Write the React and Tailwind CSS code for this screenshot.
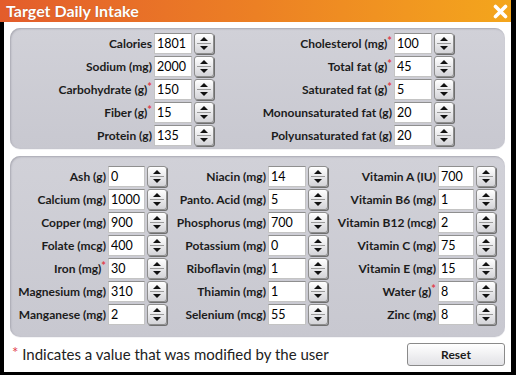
const panelOne = [
  { label: "Calories", value: "1801" },
  { label: "Cholesterol (mg)", value: "100", mod: true },
  { label: "Sodium (mg)", value: "2000" },
  { label: "Total fat (g)", value: "45", mod: true },
  { label: "Carbohydrate (g)", value: "150", mod: true },
  { label: "Saturated fat (g)", value: "5", mod: true },
  { label: "Fiber (g)", value: "15", mod: true },
  { label: "Monounsaturated fat (g)", value: "20" },
  { label: "Protein (g)", value: "135" },
  { label: "Polyunsaturated fat (g)", value: "20" },
];

const panelTwo = [
  { label: "Ash (g)", value: "0" },
  { label: "Niacin (mg)", value: "14" },
  { label: "Vitamin A (IU)", value: "700" },
  { label: "Calcium (mg)", value: "1000" },
  { label: "Panto. Acid (mg)", value: "5" },
  { label: "Vitamin B6 (mg)", value: "1" },
  { label: "Copper (mg)", value: "900" },
  { label: "Phosphorus (mg)", value: "700" },
  { label: "Vitamin B12 (mcg)", value: "2" },
  { label: "Folate (mcg)", value: "400" },
  { label: "Potassium (mg)", value: "0" },
  { label: "Vitamin C (mg)", value: "75" },
  { label: "Iron (mg)", value: "30", mod: true },
  { label: "Riboflavin (mg)", value: "1" },
  { label: "Vitamin E (mg)", value: "15" },
  { label: "Magnesium (mg)", value: "310" },
  { label: "Thiamin (mg)", value: "1" },
  { label: "Water (g)", value: "8", mod: true },
  { label: "Manganese (mg)", value: "2" },
  { label: "Selenium (mcg)", value: "55" },
  { label: "Zinc (mg)", value: "8" },
];

// label / input widths per column
const oneCols = [
  { label: "w-[142px]", input: "w-[38px]" },
  { label: "w-[178px]", input: "w-[38px]" },
];
const twoCols = [
  { label: "w-[96px]", input: "w-[37px]" },
  { label: "w-[99px]", input: "w-[38px]" },
  { label: "w-[108px]", input: "w-[36px]" },
];

const Spinner = () => (
  <div className="w-[20px] h-[21px] shrink-0 rounded-[3px] border border-[#8e8e8e] bg-linear-to-b from-[#ffffff] to-[#d4d4d8] shadow-[1px_1px_0_#6f6f6f]">
    <svg width="18" height="19" viewBox="0 0 18 19">
      <polygon points="5,7 9,3 13,7" fill="#111" />
      <line x1="2" y1="9.5" x2="16" y2="9.5" stroke="#9a9a9a" strokeWidth="1" />
      <polygon points="5,12 13,12 9,16" fill="#111" />
    </svg>
  </div>
);

const Field = ({ item, col }) => (
  <div className="flex items-center gap-[2px] h-[21px]">
    <div
      className={`${col.label} shrink-0 text-right whitespace-nowrap font-bold text-[12px] text-[#1c1c1c]`}
    >
      {item.label}
      {item.mod && (
        <span className="relative -top-[3px] text-[11px] text-[#e2404c]">*</span>
      )}
    </div>
    <input
      readOnly
      value={item.value}
      className={`${col.input} h-[21px] shrink-0 bg-white border border-[#c4c4c4] border-t-[#8f8f8f] px-[2px] text-[12.5px] text-black outline-none`}
    />
    <Spinner />
  </div>
);

const Panel = ({ className, children }) => (
  <div
    className={`rounded-[10px] bg-linear-to-b from-[#d1d1d8] to-[#c8c8d0] shadow-[inset_1px_1px_2px_#a9a9b2,0_1px_0_#f4f4f6] ${className}`}
  >
    {children}
  </div>
);

export default function App() {
  return (
    <div className="w-[516px] h-[375px] bg-black flex flex-col pr-[5px] pb-[3px] font-['Lato','Liberation_Sans',sans-serif]">
      <div className="h-[22px] shrink-0 flex items-center justify-between pl-[6px] pr-[3px] bg-linear-to-r from-[#e35c2b] via-[#ec8024] to-[#f4a61c]">
        <span className="text-white font-bold text-[16px] leading-none [text-shadow:0_0_1px_rgba(0,0,0,0.25)]">
          Target Daily Intake
        </span>
        <svg width="15" height="15" viewBox="0 0 15 15">
          <path
            d="M2.5 2.5 L12.5 12.5 M12.5 2.5 L2.5 12.5"
            stroke="#ffffff"
            strokeWidth="3.6"
            strokeLinecap="round"
          />
        </svg>
      </div>

      <div className="flex-1 ml-[4px] bg-white flex flex-col px-[6px] pt-[6px]">
        <Panel className="h-[121px] pt-[5px]">
          <div className="grid grid-cols-[204px_240px] gap-y-[2px]">
            {panelOne.map((item, i) => (
              <Field key={item.label} item={item} col={oneCols[i % 2]} />
            ))}
          </div>
        </Panel>

        <Panel className="h-[181px] mt-[7px] pt-[10px]">
          <div className="grid grid-cols-[157px_161px_168px] gap-y-[2px]">
            {panelTwo.map((item, i) => (
              <Field key={item.label} item={item} col={twoCols[i % 3]} />
            ))}
          </div>
        </Panel>

        <div className="flex items-center justify-between mt-[6px]">
          <p className="ml-[2px] text-[15px] text-[#222]">
            <span className="relative -top-[2px] text-[#e2404c]">*</span> Indicates a
            value that was modified by the user
          </p>
          <button className="w-[98px] h-[23px] rounded-[3px] border border-[#8a8a8a] bg-linear-to-b from-[#ffffff] to-[#e2e2e6] text-[12px] font-bold text-[#1c1c1c]">
            Reset
          </button>
        </div>
      </div>
    </div>
  );
}
